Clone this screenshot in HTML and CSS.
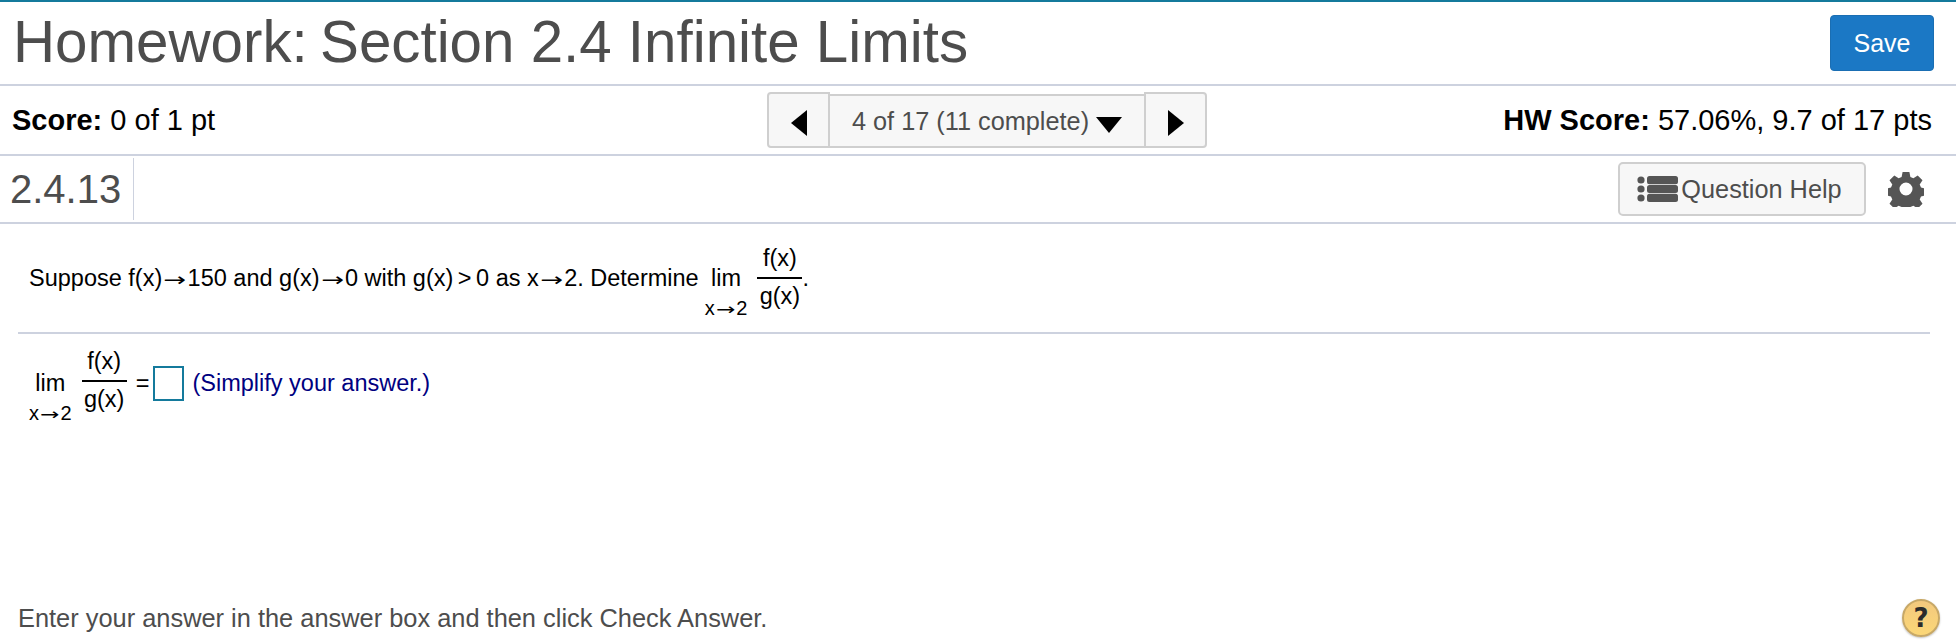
FILE: index.html
```html
<!DOCTYPE html>
<html lang="en">
<head>
  <meta charset="UTF-8">
  <title>Homework: Section 2.4 Infinite Limits</title>
  <link rel="stylesheet" href="styles.css">
</head>
<body>
  <header class="title-bar">
    <h1><span class="title-label">Homework:</span> Section 2.4 Infinite Limits</h1>
    <button class="save-btn">Save</button>
  </header>

  <div class="score-bar">
    <div class="score"><b>Score:</b> 0 of 1 pt</div>
    <div class="pager">
      <button class="pager-arrow pager-prev"><span class="tri-left"></span></button>
      <button class="pager-label">4 of 17 (11 complete)<span class="tri-down"></span></button>
      <button class="pager-arrow pager-next"><span class="tri-right"></span></button>
    </div>
    <div class="hw-score"><b>HW Score:</b> 57.06%, 9.7 of 17 pts</div>
  </div>

  <div class="question-bar">
    <div class="question-num">2.4.13</div>
    <button class="help-btn">
      <svg class="help-icon" width="41" height="26" viewBox="0 0 41 26">
        <circle cx="4" cy="4" r="3.6"/>
        <circle cx="4" cy="13" r="3.6"/>
        <circle cx="4" cy="22" r="3.6"/>
        <rect x="10" y="0" width="31" height="8.2" rx="2.5"/>
        <rect x="10" y="8.9" width="31" height="8.2" rx="2.5"/>
        <rect x="10" y="17.8" width="31" height="8.2" rx="2.5"/>
      </svg>
      Question Help
    </button>
    <svg class="gear" width="36" height="36" viewBox="0 0 36 36">
      <path fill-rule="evenodd" d="M14.6 1h6.8l1 5 3 1.3 4.3-2.8 4.8 4.8-2.8 4.3 1.3 3 5 1v6.8l-5 1-1.3 3 2.8 4.3-4.8 4.8-4.3-2.8-3 1.3-1 5h-6.8l-1-5-3-1.3-4.3 2.8-4.8-4.8 2.8-4.3-1.3-3-5-1v-6.8l5-1 1.3-3-2.8-4.3 4.8-4.8 4.3 2.8 3-1.3zM18 11.5a6.5 6.5 0 1 0 0 13 6.5 6.5 0 0 0 0-13z"/>
    </svg>
  </div>

  <main class="question">
    <div class="prompt">
      <span>Suppose f(x)<span class="arrow">→</span>150 and g(x)<span class="arrow">→</span>0 with g(x)<span class="thin">&gt;</span>0 as x<span class="arrow">→</span>2. Determine</span>
      <span class="limit">
        <span class="lim">lim</span>
        <span class="lim-sub">x<span class="arrow">→</span>2</span>
      </span>
      <span class="frac">
        <span class="num">f(x)</span>
        <span class="den">g(x)</span>
      </span>
      <span class="dot">.</span>
    </div>

    <div class="answer">
      <span class="limit">
        <span class="lim">lim</span>
        <span class="lim-sub">x<span class="arrow">→</span>2</span>
      </span>
      <span class="frac">
        <span class="num">f(x)</span>
        <span class="den">g(x)</span>
      </span>
      <span class="equals">=</span>
      <span class="answer-box"></span>
      <span class="hint">(Simplify your answer.)</span>
    </div>
  </main>

  <footer class="foot">
    <span>Enter your answer in the answer box and then click Check Answer.</span>
    <span class="help-round">?</span>
  </footer>
</body>
</html>
```

FILE: styles.css
```css
* {
  box-sizing: border-box;
}
html, body {
  height: 100%;
}
body {
  margin: 0;
  font-family: "Liberation Sans", Arial, sans-serif;
  color: #000;
  background-color: #fff;
  display: flex;
  flex-direction: column;
  overflow: hidden;
}
button {
  font-family: inherit;
}

.title-bar {
  height: 86px;
  border-top: 2px solid #147a9c;
  border-bottom: 2px solid #cdd2df;
  padding: 0 22px 0 13px;
  display: flex;
  justify-content: space-between;
  align-items: center;
}
.title-bar h1 {
  margin: 0 0 4px;
  font-size: 58.3px;
  font-weight: normal;
  color: #4d4d4d;
}
.title-label {
  margin-right: -4px;
}
.save-btn {
  width: 104px;
  height: 56px;
  background-color: #1b78c5;
  border: 1px solid #1a6eb3;
  border-radius: 4px;
  color: #fff;
  font-size: 25px;
}

.score-bar {
  height: 70px;
  border-bottom: 2px solid #cdd2df;
  padding: 0 24px 0 12px;
  display: grid;
  grid-template-columns: 1fr auto 1fr;
  align-items: center;
  font-size: 29px;
}
.hw-score {
  text-align: right;
}
.pager {
  display: flex;
  align-items: flex-end;
  height: 56px;
  margin-left: 30px;
}
.pager button {
  background-color: #f7f7f7;
  border: 2px solid #cfcfcf;
  color: #4d4d4d;
  padding: 0;
}
.pager-arrow {
  width: 63px;
  height: 56px;
  display: flex;
  align-items: center;
  justify-content: center;
}
.pager-prev {
  border-radius: 4px 0 0 4px;
}
.pager-next {
  border-radius: 0 4px 4px 0;
}
.pager-label {
  width: 314px;
  height: 54px;
  border-left: 0 !important;
  border-right: 0 !important;
  font-size: 25.3px;
}
.tri-left, .tri-right, .tri-down {
  display: inline-block;
  width: 0;
  height: 0;
}
.tri-left {
  margin-top: 6px;
  border-top: 13px solid transparent;
  border-bottom: 13px solid transparent;
  border-right: 16px solid #000;
}
.tri-right {
  margin-top: 6px;
  border-top: 13px solid transparent;
  border-bottom: 13px solid transparent;
  border-left: 16px solid #000;
}
.tri-down {
  margin-left: 7px;
  vertical-align: -3px;
  border-left: 13px solid transparent;
  border-right: 13px solid transparent;
  border-top: 16px solid #000;
}

.question-bar {
  height: 68px;
  border-bottom: 2px solid #cdd2df;
  padding: 0 32px 0 10px;
  display: flex;
  align-items: center;
}
.question-num {
  font-size: 40px;
  color: #4d4d4d;
  height: 62px;
  line-height: 62px;
  padding-right: 12px;
  border-right: 1px solid #cdd2df;
  margin-right: auto;
}
.help-btn {
  width: 248px;
  height: 54px;
  background-color: #f7f7f7;
  border: 2px solid #cfcfcf;
  border-radius: 5px;
  color: #4d4d4d;
  font-size: 25.3px;
  display: flex;
  align-items: center;
  justify-content: center;
  gap: 3px;
  padding: 0 5px 0 0;
}
.help-icon {
  fill: #555;
}
.gear {
  margin-left: 22px;
  fill: #555;
}

.question {
  flex: 1;
  font-size: 23.5px;
  padding: 0 26px 0 18px;
}
.prompt, .answer {
  display: flex;
  align-items: center;
}
.prompt {
  height: 110px;
  padding: 0 11px;
  border-bottom: 2px solid #cdd2df;
}
.answer {
  padding: 8px 11px 0;
}
.arrow {
  display: inline-block;
  width: 1.35em;
  line-height: 1;
  text-align: center;
  font-family: "DejaVu Sans", sans-serif;
  font-size: 0.8em;
  transform: scaleX(1.45);
}
.thin {
  margin: 0 4.5px;
}
.limit {
  display: inline-flex;
  flex-direction: column;
  align-items: center;
  margin-left: 6px;
  padding-top: 28px;
}
.answer .limit {
  margin-left: 0;
}
.lim {
  line-height: 26px;
}
.lim-sub {
  font-size: 20px;
  line-height: 22px;
  margin-top: 6px;
}
.frac {
  display: inline-flex;
  flex-direction: column;
  align-items: center;
  min-width: 45px;
  margin: 0 0 2px 10px;
}
.answer .frac {
  margin-bottom: 5px;
}
.num {
  width: 100%;
  text-align: center;
  padding-bottom: 5px;
  border-bottom: 2px solid #000;
}
.den {
  padding-top: 4px;
}
.equals {
  margin: 0 4px 0 9px;
}
.answer-box {
  width: 31px;
  height: 35px;
  border: 2px solid #147a9c;
}
.hint {
  margin-left: 8px;
  color: #00007f;
}

.foot {
  height: 48px;
  padding: 0 16px 0 18px;
  display: flex;
  justify-content: space-between;
  align-items: center;
  font-size: 25.4px;
  color: #4d4d4d;
}
.help-round {
  width: 38px;
  height: 38px;
  border-radius: 50%;
  border: 2px solid #c7a867;
  background: linear-gradient(#f3c97e, #fbd777);
  box-shadow: 0 1px 2px rgba(0, 0, 0, 0.25);
  color: #2b2b2b;
  font-family: "DejaVu Sans", sans-serif;
  font-weight: bold;
  font-size: 26px;
  line-height: 34px;
  text-align: center;
}
```
